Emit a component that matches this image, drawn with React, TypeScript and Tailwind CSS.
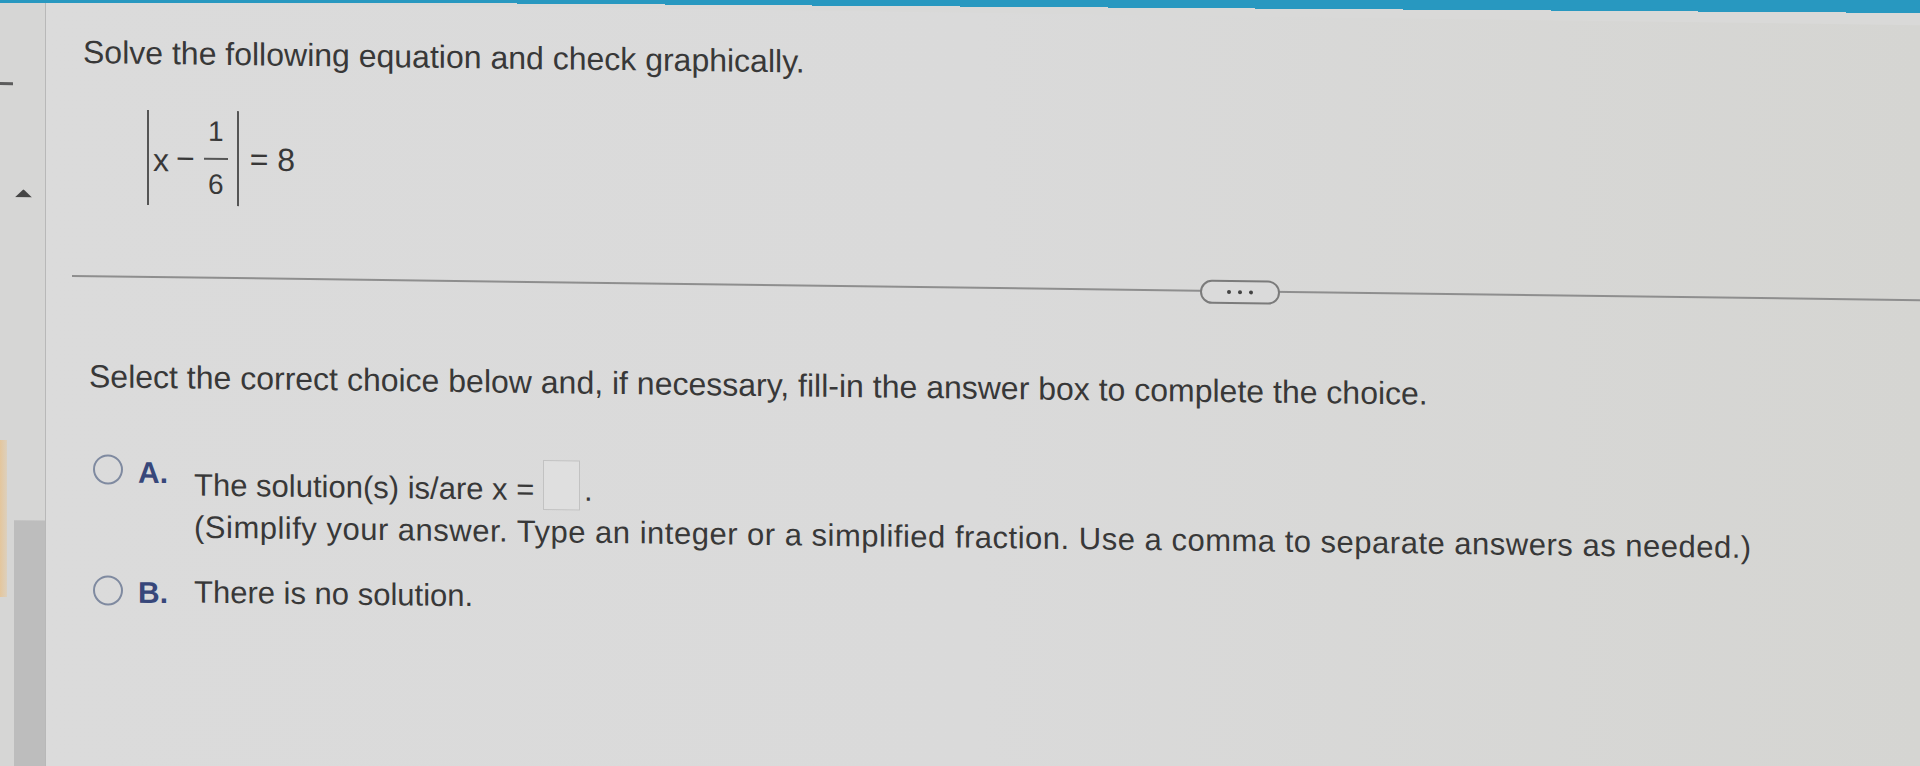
import React from "react"

function Sidebar() {
  return (
    <aside className="flex w-[46px] shrink-0 flex-col border-r border-[#b8b8b8] bg-[#d6d6d5]">
      <div className="mt-[82px] h-[3px] w-[13px] shrink-0 bg-[#5c5c5c]" />
      <svg className="ml-[15px] mt-[104px] shrink-0" width="17" height="8" viewBox="0 0 17 8">
        <polygon points="8.5,0 17,8 0,8" fill="#454545" />
      </svg>
      <div className="mt-[243px] flex shrink-0 items-start">
        <div className="h-[157px] w-[7px] bg-linear-to-r from-[#e4c69c] to-[#ddd0bd]" />
        <div className="ml-[7px] mt-[80px] h-[260px] w-[31px] bg-[#bdbdbd]" />
      </div>
    </aside>
  )
}

function Radio({ className = "" }: { className?: string }) {
  return (
    <span
      className={`block h-[30px] w-[30px] shrink-0 rounded-full border-[2.5px] border-[#7f8aa0] ${className}`}
    />
  )
}

function Equation() {
  return (
    <div className="ml-[64px] mt-[41px] flex h-[95px] items-center text-[32px] leading-[32px]">
      <div className="h-full w-[2px] bg-[#555]" />
      <span className="ml-[4px] pt-[4px]">x</span>
      <span className="ml-[7px]">−</span>
      <div className="ml-[9px] flex w-[24px] flex-col items-center">
        <span className="text-[28px] leading-[28px]">1</span>
        <div className="mt-[12px] h-[2px] w-[24px] bg-[#555]" />
        <span className="mt-[11px] text-[28px] leading-[28px]">6</span>
      </div>
      <div className="ml-[9px] h-full w-[2px] bg-[#555]" />
      <span className="ml-[11px]">= 8</span>
    </div>
  )
}

export default function App() {
  return (
    <div className="relative h-[766px] w-[1920px] overflow-hidden bg-[#d9d9d8] font-['Liberation_Sans',Arial,sans-serif] text-[#383838]">
      <div className="flex h-[800px] w-[1920px] origin-top-left skew-y-[0.75deg]">
        <Sidebar />
        <main className="flex-1 bg-linear-to-r from-[#dbdbdb] via-[#dadada] to-[#d5d5d2] pl-[37px]">
          <h1 className="mt-[35px] text-[32px] font-normal leading-[32px]">
            Solve the following equation and check graphically.
          </h1>

          <Equation />

          <div className="relative ml-[-11px] mt-[71px] h-[2px] bg-[#8e8e8e]">
            <div className="absolute left-[1128px] top-[-10px] flex h-[24px] w-[80px] items-center justify-center gap-[7px] rounded-[12px] border-2 border-[#7b7b7b] bg-[#dadada]">
              <span className="h-[4px] w-[4px] rounded-full bg-[#444]" />
              <span className="h-[4px] w-[4px] rounded-full bg-[#444]" />
              <span className="h-[4px] w-[4px] rounded-full bg-[#444]" />
            </div>
          </div>

          <p className="ml-[6px] mt-[83px] text-[32px] leading-[32px]">
            Select the correct choice below and, if necessary, fill-in the answer box to complete the choice.
          </p>

          <div className="mt-[62px]">
            <div className="ml-[10px] flex items-start">
              <Radio />
              <span className="ml-[15px] mt-[3px] w-[56px] text-[30px] font-bold leading-[30px] text-[#37477a]">
                A.
              </span>
              <div className="text-[31px] leading-[42px]">
                The solution(s) is/are x ={" "}
                <span className="mr-[4px] inline-block h-[50px] w-[37px] border-[1.5px] border-[#c2c2c2] bg-[#dfdfdf] align-[-10px]" />
                .
                <br />
                <span className="tracking-[0.5px]">
                  (Simplify your answer. Type an integer or a simplified fraction. Use a comma to separate answers as needed.)
                </span>
              </div>
            </div>

            <div className="ml-[10px] mt-[23px] flex items-start">
              <Radio className="mt-[5px]" />
              <span className="ml-[15px] mt-[7px] w-[56px] text-[30px] font-bold leading-[30px] text-[#37477a]">
                B.
              </span>
              <div className="text-[31px] leading-[42px]">There is no solution.</div>
            </div>
          </div>
        </main>
      </div>
      <div className="pointer-events-none absolute inset-x-0 top-0 h-[13px] bg-[linear-gradient(to_bottom,#2898c0_3px,transparent_3px),linear-gradient(to_top_right,transparent_50%,#2898c0_50%)]" />
    </div>
  )
}
